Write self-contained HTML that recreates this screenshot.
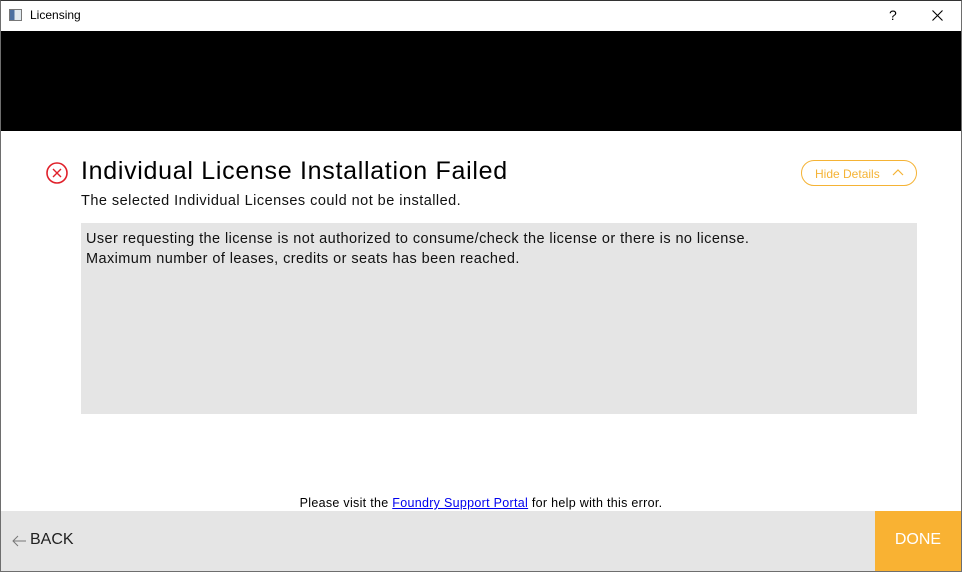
<!DOCTYPE html>
<html><head><meta charset="utf-8"><style>
*{margin:0;padding:0;box-sizing:border-box}
body{width:962px;height:572px;overflow:hidden;background:#fff;font-family:"Liberation Sans","DejaVu Sans",sans-serif;position:relative}
.win{position:absolute;left:0;top:0;width:962px;height:572px;border:1px solid #6e6e6e;border-top:1px solid #333}
.abs{position:absolute}
</style></head><body>
<div class="win"></div>
<div class="abs" style="left:1px;top:1px;width:960px;height:30px;background:#fff"></div>
<div class="abs" style="left:9px;top:9px;width:13px;height:12px;border:1px solid #777;background:linear-gradient(90deg,#4a6fa0 0 40%,#dfe8ee 40%)"></div>
<div class="abs" style="left:30px;top:8px;font-size:12px;color:#000">Licensing</div>
<div class="abs" style="left:889px;top:7px;font-size:14px;color:#000">?</div>
<svg class="abs" style="left:932px;top:10px" width="11" height="11"><path d="M0.5 0.5L10.5 10.5M10.5 0.5L0.5 10.5" stroke="#000" stroke-width="1.1"/></svg>
<div class="abs" style="left:1px;top:31px;width:960px;height:100px;background:#000"></div>
<svg class="abs" style="left:45px;top:161px" width="24" height="24"><circle cx="12" cy="12" r="10" fill="none" stroke="#e0202a" stroke-width="1.6"/><path d="M8 8L16 16M16 8L8 16" stroke="#e0202a" stroke-width="1.4"/></svg>
<div class="abs" style="left:81px;top:157px;font-size:25px;color:#000;letter-spacing:0.7px">Individual License Installation Failed</div>
<div class="abs" style="left:81px;top:193px;font-size:14.5px;color:#111;letter-spacing:0.47px">The selected Individual Licenses could not be installed.</div>
<div class="abs" style="left:801px;top:160px;width:116px;height:26px;border:1px solid #f5b335;border-radius:13px;color:#f5b335;font-size:12px;padding:6px 0 0 13px">Hide Details</div>
<svg class="abs" style="left:892px;top:168px" width="12" height="8"><path d="M1 7L6 2L11 7" fill="none" stroke="#f5b335" stroke-width="1.2"/></svg>
<div class="abs" style="left:81px;top:223px;width:836px;height:191px;background:#e5e5e5;padding:6px 0 0 5px;font-size:14.5px;color:#111;line-height:20px;letter-spacing:0.42px">User requesting the license is not authorized to consume/check the license or there is no license.<br>Maximum number of leases, credits or seats has been reached.</div>
<div class="abs" style="left:0;top:496px;width:962px;text-align:center;font-size:12.5px;color:#000;letter-spacing:0.3px">Please visit the <span style="color:#0000ee;text-decoration:underline">Foundry Support Portal</span> for help with this error.</div>
<div class="abs" style="left:1px;top:511px;width:874px;height:60px;background:#e5e5e5"></div>
<div class="abs" style="left:875px;top:511px;width:86px;height:60px;background:#f9b233;color:#fff;font-size:16px;text-align:center;padding-top:20px">DONE</div>
<svg class="abs" style="left:12px;top:535px" width="15" height="12"><path d="M14 6H1M6 1L1 6L6 11" fill="none" stroke="#777" stroke-width="1"/></svg>
<div class="abs" style="left:30px;top:531px;font-size:16px;color:#222">BACK</div>
<div class="abs" style="left:0;top:571px;width:962px;height:1px;background:#6e6e6e"></div>
</body></html>
